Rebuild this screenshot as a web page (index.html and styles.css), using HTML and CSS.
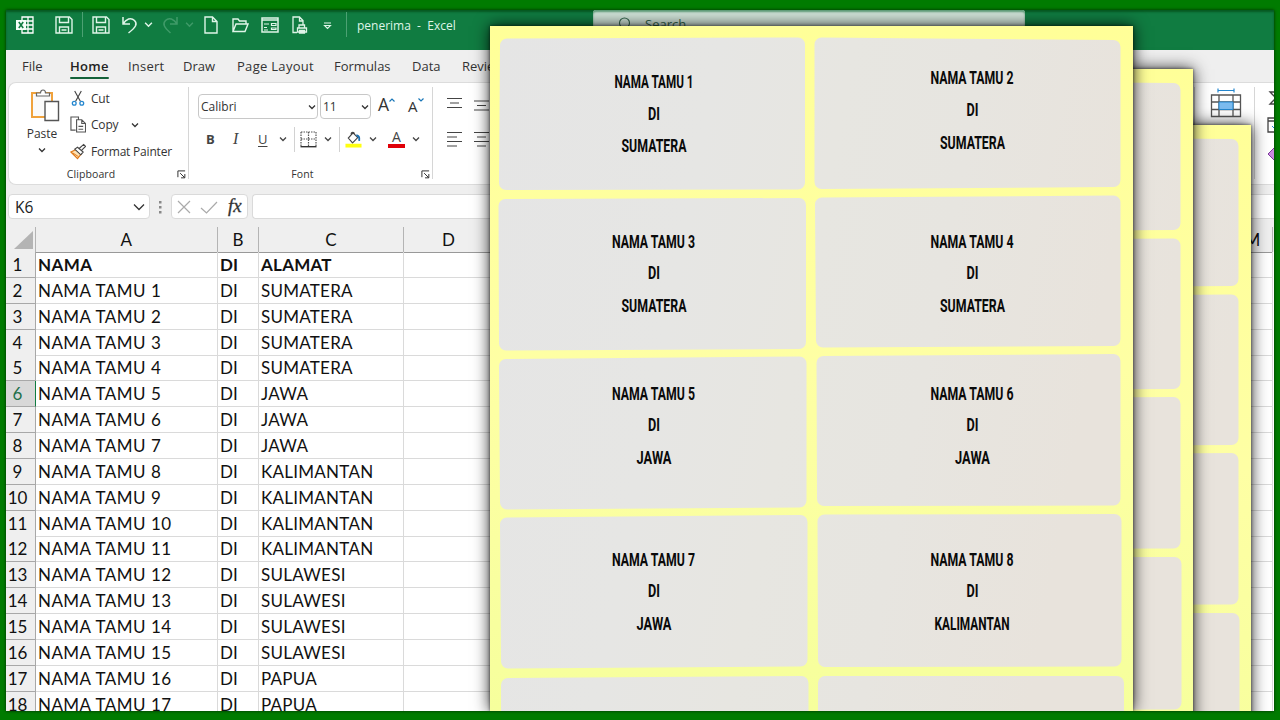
FILE: index.html
```html
<!DOCTYPE html>
<html lang="id">
<head>
<meta charset="utf-8">
<title>penerima - Excel</title>
<link rel="stylesheet" href="styles.css">
</head>
<body>
<svg width="0" height="0" class="defs">
  <defs>
    <symbol id="chev" viewBox="0 0 8 8"><path d="M1 2.5 4 5.5 7 2.5" fill="none" stroke="currentColor" stroke-width="1.3"/></symbol>
    <symbol id="save" viewBox="0 0 18 18"><path d="M1 1h13.5L17 3.500V17H1zM4.500 1v5.500h9V1M4.500 17v-6h9v6M6.500 14h5" fill="none" stroke="currentColor" stroke-width="1.4"/></symbol>
    <symbol id="launch" viewBox="0 0 10 10"><path d="M1 8V1h8M3.500 3.500 8.500 8.500M8.700 4.500v4.200H4.500" fill="none" stroke="#333" stroke-width="1.100"/></symbol>
    <linearGradient id="paper" gradientUnits="userSpaceOnUse" x1="0" y1="0" x2="643" y2="120">
      <stop offset="0" stop-color="#e5e5e5"/><stop offset=".35" stop-color="#e6e6e4"/><stop offset=".55" stop-color="#e7e6e1"/><stop offset=".75" stop-color="#e7e5e0"/><stop offset="1" stop-color="#e8e3dc"/>
    </linearGradient>
    <linearGradient id="edge" x1="0" y1="0" x2="0" y2="1">
      <stop offset="0" stop-color="#ffff98"/><stop offset=".5" stop-color="#feffa4"/><stop offset="1" stop-color="#f6ff9c"/>
    </linearGradient>
    <symbol id="labels" viewBox="0 0 643 685">
      <rect width="643" height="685" fill="url(#edge)"/>
      <g fill="url(#paper)" stroke="url(#paper)" stroke-width="14" stroke-linejoin="round">
        <path d="M17 19.500 308 18.500V156.500L16 157zM331.500 18.500 623.500 21V154L331.500 156z"/>
        <path d="M15.500 180 309 179V316L16 317.500zM332 178.500 623.500 176.500V313L333 314.500z"/>
        <path d="M16 340 309.500 337.500V474.500L17 476.500zM333.500 337 623.500 335V472.500L334 473z"/>
        <path d="M17 498.500 310.500 496V633.500L18 635.500zM334.500 495.500 624.500 495V633.500L335 634z"/>
        <path d="M18 659 311.500 657V700H18zM335 657 627 657V700H335z"/>
      </g>
    </symbol>
  </defs>
</svg>
<div class="window">
  <header class="titlebar">
    <svg class="i-xl" viewBox="0 0 18 18"><path d="M6 1h11v16H6zM6 5h11M6 9h11M6 13h11M12 1v16" fill="none" stroke="#fff" stroke-width="1.300"/><path d="M0 4h10v10H0z" fill="#f4fff8"/><path d="M2.800 6 7.200 12M7.200 6 2.800 12" stroke="#107c41" stroke-width="1.600"/></svg>
    <svg class="i-save"><use href="#save"/></svg>
    <i class="tsep"></i>
    <svg class="i-save two"><use href="#save"/></svg>
    <svg class="i-undo" viewBox="0 0 17 18"><path d="M2 1v7h7M2 8C5 3 10 1 13.500 4.500S14.500 11.500 7.500 17" fill="none" stroke="currentColor" stroke-width="1.500"/></svg>
    <svg class="i-ch"><use href="#chev"/></svg>
    <svg class="i-undo redo" viewBox="0 0 17 18"><path d="M15 1v7H8M15 8C12 3 7 1 3.500 4.500S2.500 11.500 8.500 17" fill="none" stroke="currentColor" stroke-width="1.500"/></svg>
    <svg class="i-ch dim"><use href="#chev"/></svg>
    <svg class="i-new" viewBox="0 0 14 18"><path d="M1 1h7.500L13 5.500V17H1zM8.500 1v4.500H13" fill="none" stroke="currentColor" stroke-width="1.400"/></svg>
    <svg class="i-open" viewBox="0 0 17 15"><path d="M1 13.500V1h5l1.500 2H14v3M1 13.500 4 6h12L13 13.500z" fill="none" stroke="currentColor" stroke-width="1.400"/></svg>
    <svg class="i-form" viewBox="0 0 18 16"><path d="M1 1h16v14H1zM1 3h16" fill="none" stroke="currentColor" stroke-width="1.500"/><path d="M3 7h5M3 10.500h3M10.500 6.500H15v2h-4.500zM10.500 11H15v1.500h-4.500zM3 13h4" fill="none" stroke="currentColor" stroke-width="1.200"/></svg>
    <svg class="i-print" viewBox="0 0 16 18"><path d="M5 16.500H1V1h6.500L11 4.500V9M7.500 1v4H11M7 12V9h5.500v3M5.500 12h9v4h-9zM7.500 14.500h5v2.500h-5z" fill="none" stroke="currentColor" stroke-width="1.300"/></svg>
    <svg class="i-qat" viewBox="0 0 9 8"><path d="M1 1h7M1.500 3.500h6L4.500 6.500z" fill="none" stroke="currentColor" stroke-width="1.100"/></svg>
    <i class="tsep last"></i>
    <span class="doc">penerima&nbsp; -&nbsp; Excel</span>
    <div class="search"><svg viewBox="0 0 14 14"><circle cx="6.500" cy="6" r="5" fill="none" stroke="#34664c" stroke-width="1.100"/><path d="M10 9.500 13 13" stroke="#34664c"/></svg><span>Search</span></div>
  </header>
  <nav class="tabs"><span class="t-file">File</span><span class="t-home">Home</span><span class="t-ins">Insert</span><span class="t-draw">Draw</span><span class="t-page">Page Layout</span><span class="t-form">Formulas</span><span class="t-data">Data</span><span class="t-rev">Review</span></nav>
  <section class="ribbon">
    <div class="group clipboard">
      <div class="tools">
        <div class="paste">
          <svg viewBox="0 0 30 34"><path d="M5 4h17v24H2V4z" fill="#fafafa" stroke="#f0a23c" stroke-width="2"/><path d="M6.500 7V4h4c0-4 5-4 5 0h4v3z" fill="#fff" stroke="#666" stroke-width="1.200"/><path d="M15 12.500h13.500v19H15z" fill="#fff" stroke="#555" stroke-width="1.400"/></svg>
          <span>Paste</span>
          <svg class="ch"><use href="#chev"/></svg>
        </div>
        <div class="clips">
          <div><svg viewBox="0 0 16 18"><path d="M4.500 1 10.500 12M11.500 1 5.500 12" stroke="#444" stroke-width="1.200"/><circle cx="4" cy="14" r="2" fill="none" stroke="#2587cf" stroke-width="1.400"/><circle cx="12" cy="14" r="2" fill="none" stroke="#2587cf" stroke-width="1.400"/></svg><span>Cut</span></div>
          <div><svg viewBox="0 0 17 18"><path d="M6 15H1V1h8v3M7 4h5.500l4 4v9H7zM12.500 4v4h4M9 11h5M9 14h5" fill="#fff" stroke="#555" stroke-width="1.200"/></svg><span>Copy</span><svg class="ch"><use href="#chev"/></svg></div>
          <div><svg viewBox="0 0 17 17"><path d="M1 9 7 6 12 11 8 16z" fill="#ffe2b4" stroke="#e07818" stroke-width="1.300"/><path d="M3 10l6 4" stroke="#e07818"/><path d="M5 6 8 4l6 5-2.500 3zM10 5l4.500-4L16.500 3 12.500 7" fill="#fff" stroke="#444" stroke-width="1.200"/></svg><span>Format Painter</span></div>
        </div>
      </div>
      <div class="caption">Clipboard<svg><use href="#launch"/></svg></div>
    </div>
    <div class="group font">
      <div class="frow1">
        <div class="combo name">Calibri<svg><use href="#chev"/></svg></div><div class="combo size">11<svg><use href="#chev"/></svg></div>
        <span class="grow">A<svg viewBox="0 0 6 4"><path d="M.5 3.500 3 1 5.500 3.500" fill="none" stroke="#1976b8" stroke-width="1.200"/></svg></span>
        <span class="grow small">A<svg viewBox="0 0 6 4"><path d="M.5 .5 3 3 5.500 .5" fill="none" stroke="#1976b8" stroke-width="1.200"/></svg></span>
      </div>
      <div class="frow2">
        <b>B</b><em>I</em><u>U</u><svg class="ch"><use href="#chev"/></svg><i class="rsep"></i>
        <svg class="bord" viewBox="0 0 17 17"><path d="M1 1h15v14M1 1v14M8.500 1v14M1 8h15" fill="none" stroke="#555" stroke-width="1.200" stroke-dasharray="1.500 1"/><path d="M.5 15.700h16" stroke="#333" stroke-width="1.400"/></svg><svg class="ch"><use href="#chev"/></svg><i class="rsep"></i>
        <svg class="fill" viewBox="0 0 17 18"><path d="M8 2 3 7.500 7.500 12.500 13 7 8 2M6 3.500C6 .5 9.500 .5 9.500 4" fill="none" stroke="#444" stroke-width="1.200"/><path d="M11.500 4.500c3 .5 3.500 3 3 6" fill="none" stroke="#1b6fb0" stroke-width="2"/><path d="M0 13.500h17v4H0z" fill="#ffff10"/></svg><svg class="ch"><use href="#chev"/></svg>
        <span class="acolor">A</span><svg class="ch"><use href="#chev"/></svg>
      </div>
      <div class="caption">Font<svg><use href="#launch"/></svg></div>
    </div>
    <div class="group align">
      <svg viewBox="0 0 42 14"><path d="M0 1.500h15M3 6h9M0 10.500h15M27 4h15M30 8.500h9M27 13h15" stroke="#444" stroke-width="1.200"/></svg>
      <svg viewBox="0 0 42 16"><path d="M0 1.500h15M0 6h10M0 10.500h15M0 15h10M27 1.500h15M30 6h9M27 10.500h15M30 15h9" stroke="#444" stroke-width="1.200"/></svg>
    </div>
    <div class="group cells">
      <svg viewBox="0 0 36 32"><path d="M8 .5v4M24 .5v4M8 2.500h16" stroke="#2587cf" fill="none" stroke-width="1.200"/><path d="M1.500 7h29v21.500h-29zM9 7v21.500M23 7v21.500M1.500 14h29M1.500 21.500h29" fill="#fff" stroke="#555" stroke-width="1.300"/><path d="M9 14h14v7.500H9z" fill="#7dbcf0" stroke="#2587cf"/></svg>
    </div>
    <div class="group edit">
      <svg viewBox="0 0 12 76"><path d="M11 2H3l6 6-6 6h8" fill="none" stroke="#444" stroke-width="1.300"/><path d="M1 28h11v14H1zM1 31h11" fill="none" stroke="#444" stroke-width="1.300"/><path d="M5 36l3 3 3-3" fill="none" stroke="#2587cf"/><path d="M1 64 7 58h5v12H7z" fill="#c98be0" stroke="#7d3a9c"/></svg>
    </div>
  </section>
  <section class="fbar">
    <div class="namebox">K6<svg viewBox="0 0 12 8"><path d="M1 1.500 6 6.500 11 1.500" fill="none" stroke="#333" stroke-width="1.300"/></svg></div>
    <svg class="dots" viewBox="0 0 3 14"><path d="M0 0h2.500v2.500H0zM0 5h2.500v2.500H0zM0 10h2.500v2.500H0z" fill="#888"/></svg>
    <div class="fx"><svg viewBox="0 0 42 14"><path d="M1 1 13 13M13 1 1 13M24 8 29.500 13 40 2" fill="none" stroke="#aaa" stroke-width="1.200"/></svg><span>fx</span></div>
    <div class="formula"></div>
  </section>
  <section class="grid">
    <div class="row head"><span class="n"><svg viewBox="0 0 19 18"><path d="M19 0v18H0z" fill="#b4b4b4"/></svg></span><span>A</span><span>B</span><span>C</span><span>D</span><span class="wide"></span><span>M</span></div>
    <div class="row bold"><span class="n">1</span><span>NAMA</span><span>DI</span><span>ALAMAT</span><span></span><span></span><span></span></div>
    <div class="row"><span class="n">2</span><span>NAMA TAMU 1</span><span>DI</span><span>SUMATERA</span><span></span><span></span><span></span></div>
    <div class="row"><span class="n">3</span><span>NAMA TAMU 2</span><span>DI</span><span>SUMATERA</span><span></span><span></span><span></span></div>
    <div class="row"><span class="n">4</span><span>NAMA TAMU 3</span><span>DI</span><span>SUMATERA</span><span></span><span></span><span></span></div>
    <div class="row"><span class="n">5</span><span>NAMA TAMU 4</span><span>DI</span><span>SUMATERA</span><span></span><span></span><span></span></div>
    <div class="row active"><span class="n">6</span><span>NAMA TAMU 5</span><span>DI</span><span>JAWA</span><span></span><span></span><span></span></div>
    <div class="row"><span class="n">7</span><span>NAMA TAMU 6</span><span>DI</span><span>JAWA</span><span></span><span></span><span></span></div>
    <div class="row"><span class="n">8</span><span>NAMA TAMU 7</span><span>DI</span><span>JAWA</span><span></span><span></span><span></span></div>
    <div class="row"><span class="n">9</span><span>NAMA TAMU 8</span><span>DI</span><span>KALIMANTAN</span><span></span><span></span><span></span></div>
    <div class="row"><span class="n">10</span><span>NAMA TAMU 9</span><span>DI</span><span>KALIMANTAN</span><span></span><span></span><span></span></div>
    <div class="row"><span class="n">11</span><span>NAMA TAMU 10</span><span>DI</span><span>KALIMANTAN</span><span></span><span></span><span></span></div>
    <div class="row"><span class="n">12</span><span>NAMA TAMU 11</span><span>DI</span><span>KALIMANTAN</span><span></span><span></span><span></span></div>
    <div class="row"><span class="n">13</span><span>NAMA TAMU 12</span><span>DI</span><span>SULAWESI</span><span></span><span></span><span></span></div>
    <div class="row"><span class="n">14</span><span>NAMA TAMU 13</span><span>DI</span><span>SULAWESI</span><span></span><span></span><span></span></div>
    <div class="row"><span class="n">15</span><span>NAMA TAMU 14</span><span>DI</span><span>SULAWESI</span><span></span><span></span><span></span></div>
    <div class="row"><span class="n">16</span><span>NAMA TAMU 15</span><span>DI</span><span>SULAWESI</span><span></span><span></span><span></span></div>
    <div class="row"><span class="n">17</span><span>NAMA TAMU 16</span><span>DI</span><span>PAPUA</span><span></span><span></span><span></span></div>
    <div class="row"><span class="n">18</span><span>NAMA TAMU 17</span><span>DI</span><span>PAPUA</span><span></span><span></span><span></span></div>
  </section>

  <svg class="sheet third" viewBox="0 0 643 685"><use href="#labels"/></svg>
  <svg class="sheet second" viewBox="0 0 643 685"><use href="#labels"/></svg>
  <svg class="sheet first" viewBox="0 0 643 685">
    <use href="#labels"/>
    <g class="label-text" transform="translate(0 -.7)">
      <text x="124.500" y="63" textLength="79" lengthAdjust="spacingAndGlyphs">NAMA TAMU 1</text><text x="158" y="94.500" textLength="12" lengthAdjust="spacingAndGlyphs">DI</text><text x="131.500" y="126.500" textLength="65" lengthAdjust="spacingAndGlyphs">SUMATERA</text>
      <text x="440.500" y="59" textLength="83" lengthAdjust="spacingAndGlyphs">NAMA TAMU 2</text><text x="476.500" y="90.500" textLength="12" lengthAdjust="spacingAndGlyphs">DI</text><text x="450" y="123.500" textLength="65" lengthAdjust="spacingAndGlyphs">SUMATERA</text>
      <text x="122" y="223" textLength="83" lengthAdjust="spacingAndGlyphs">NAMA TAMU 3</text><text x="158" y="254" textLength="12" lengthAdjust="spacingAndGlyphs">DI</text><text x="131.500" y="287" textLength="65" lengthAdjust="spacingAndGlyphs">SUMATERA</text>
      <text x="440.500" y="223" textLength="83" lengthAdjust="spacingAndGlyphs">NAMA TAMU 4</text><text x="476.500" y="254" textLength="12" lengthAdjust="spacingAndGlyphs">DI</text><text x="450" y="287" textLength="65" lengthAdjust="spacingAndGlyphs">SUMATERA</text>
      <text x="122" y="375" textLength="83" lengthAdjust="spacingAndGlyphs">NAMA TAMU 5</text><text x="158" y="406" textLength="12" lengthAdjust="spacingAndGlyphs">DI</text><text x="146.500" y="439" textLength="35" lengthAdjust="spacingAndGlyphs">JAWA</text>
      <text x="440.500" y="375" textLength="83" lengthAdjust="spacingAndGlyphs">NAMA TAMU 6</text><text x="476.500" y="406" textLength="12" lengthAdjust="spacingAndGlyphs">DI</text><text x="465" y="439" textLength="35" lengthAdjust="spacingAndGlyphs">JAWA</text>
      <text x="122" y="540.500" textLength="83" lengthAdjust="spacingAndGlyphs">NAMA TAMU 7</text><text x="158" y="572" textLength="12" lengthAdjust="spacingAndGlyphs">DI</text><text x="146.500" y="604.500" textLength="35" lengthAdjust="spacingAndGlyphs">JAWA</text>
      <text x="440.500" y="540.500" textLength="83" lengthAdjust="spacingAndGlyphs">NAMA TAMU 8</text><text x="476.500" y="572" textLength="12" lengthAdjust="spacingAndGlyphs">DI</text><text x="444.500" y="604.500" textLength="75" lengthAdjust="spacingAndGlyphs">KALIMANTAN</text>
    </g>
  </svg>
</div>
</body>
</html>
```
FILE: styles.css
```css
* { box-sizing: border-box; }
body { margin: 0; width: 1280px; height: 720px; overflow: hidden; background: #007b00; padding: 10px 6px 9px; font-family: "Open Sans", "Noto Sans", sans-serif; color: #333; }
.defs { position: absolute; }
.window { position: relative; height: 701px; overflow: hidden; background: #efefef; display: flex; flex-direction: column; box-shadow: 0 0 3px #002800; }
.window svg { flex: none; display: block; }

.titlebar { height: 40px; flex: none; background: #107c41; color: #dff5e8; display: flex; align-items: flex-start; padding: 6px 0 0 10px; box-shadow: inset 0 2px 2px #075a22; }
.i-xl { width: 18px; height: 18px; }
.i-save { width: 18px; height: 18px; margin-left: 21px; }
.i-save.two { margin-left: 9px; }
.tsep { width: 1px; height: 25px; background: #4ca173; margin: -4px 0 0 9px; }
.i-undo { width: 17px; height: 18px; margin-left: 11px; }
.i-ch { width: 9px; height: 9px; margin: 4px 0 0 6px; }
.redo, .dim { color: #3f9a68; }
.redo { margin-left: 9px; }
.i-new { width: 14px; height: 18px; margin-left: 10px; }
.i-open { width: 17px; height: 15px; margin: 2px 0 0 14px; }
.i-form { width: 18px; height: 16px; margin: 1px 0 0 12px; }
.i-print { width: 16px; height: 18px; margin-left: 13px; }
.i-qat { width: 9px; height: 8px; margin: 6px 0 0 15px; }
.tsep.last { margin-left: 14px; }
.doc { font-size: 12px; line-height: 20px; margin-left: 10px; width: 110px; white-space: nowrap; }
.search { width: 432px; height: 30px; margin: -6px 0 0 126px; background: #d0e3d8; border-radius: 3px; display: flex; padding: 7px 0 0 25px; gap: 13px; color: #34664c; font-size: 13px; line-height: 15px; box-shadow: inset 0 2px 2px #5b9c77; }
.search svg { width: 14px; height: 14px; }

.tabs { height: 32px; flex: none; display: grid; grid-template-columns: 48px 58px 55px 53px 98px 78px 50px 50px; padding-left: 16px; font-size: 13px; line-height: 32px; white-space: nowrap; }
.t-home { font-weight: 600; letter-spacing: .3px; color: #222; position: relative; }
.t-page { padding-left: 1px; letter-spacing: .3px; }
.t-ins { letter-spacing: .2px; }
.t-home::after { content: ""; position: absolute; left: 0; top: 27px; width: 39px; height: 2px; background: #14623a; border-radius: 1px; }

.ribbon { height: 103px; flex: none; margin-left: 2px; background: #fff; border: 1px solid #dcdcdc; border-right: 0; border-radius: 8px 0 0 8px; display: flex; font-size: 12px; }
.group { position: relative; flex: none; }
.group:not(.edit)::after { content: ""; position: absolute; right: 0; top: 4px; height: 92px; border-right: 1px solid #d6d6d6; }
.ch { width: 8px; height: 8px; }
.clipboard { width: 180px; padding-top: 6px; }
.tools { display: flex; height: 77px; }
.paste { width: 50px; margin-left: 8px; display: flex; flex-direction: column; align-items: center; }
.paste > svg:first-child { width: 30px; height: 34px; margin-left: 5px; }
.paste span { line-height: 17px; margin: 2px 0 4px; }
.clips { display: flex; flex-direction: column; margin-left: 3px; gap: 8.500px; letter-spacing: -.2px; }
.clips div { display: flex; align-items: center; height: 18px; white-space: nowrap; }
.clips div > svg:first-child { width: 16px; height: 17px; margin-right: 5px; }
.clips .ch { margin-left: 13px; }
.caption { display: flex; justify-content: center; font-size: 10.500px; letter-spacing: .1px; line-height: 16px; position: relative; padding-right: 16px; }
.caption svg { position: absolute; right: 3px; top: 4px; width: 9px; height: 9px; }
.font { width: 244px; padding: 11px 0 0 9px; }
.frow1 { display: flex; height: 26px; }
.combo { height: 25px; border: 1px solid #c8c8c8; border-radius: 4px; line-height: 24px; padding-left: 2px; display: flex; justify-content: space-between; align-items: center; }
.combo svg { width: 8px; height: 8px; margin-right: 1px; }
.name { width: 120px; }
.size { width: 51px; margin-left: 2px; }
.grow { font-size: 17.500px; line-height: 21px; margin-left: 7px; display: flex; }
.grow svg { width: 6px; height: 4px; margin-top: 4px; }
.grow.small { font-size: 15px; line-height: 24px; margin-left: 13px; }
.frow2 { display: flex; align-items: center; height: 32px; margin-top: 3px; padding-left: 8px; font-size: 14px; color: #444; }
.frow2 b { width: 27px; font-size: 13px; }
.frow2 em { width: 25px; font-family: "Liberation Serif", serif; font-size: 16px; }
.frow2 u { width: 21px; text-underline-offset: 2px; font-size: 13px; }
.rsep { width: 1px; height: 25px; background: #d2d2d2; margin: 0 5px 0 7px; }
.rsep + svg { width: 17px; height: 17px; margin-right: 7px; }
.bord + .ch + .rsep { margin-right: 5px; margin-left: 7px; }
.acolor { width: 17px; height: 18px; line-height: 14px; text-align: center; border-bottom: 4px solid #e00008; margin: 0 7px 0 11px; }
.font .caption { margin-top: 11px; padding-right: 26px; height: 16px; }
.align { width: 762px; padding: 14px 0 0 13.500px; }
.align svg { width: 42px; height: 14px; margin-bottom: 20px; }
.align svg + svg { height: 16px; }
.cells { width: 60px; padding: 5px 0 0 15px; }
.cells svg { width: 36px; height: 32px; }
.edit { padding: 7px 0 0 12px; }
.edit svg { width: 12px; height: 76px; }

.fbar { height: 42px; flex: none; display: flex; padding: 9px 0 0 2px; }
.namebox { width: 142px; height: 25px; background: #fff; border: 1px solid #dadada; border-radius: 4px; padding: 0 4px 0 6px; display: flex; align-items: center; justify-content: space-between; font-size: 15.500px; line-height: 22px; color: #222; }
.namebox svg { width: 12px; height: 8px; }
.dots { width: 3px; height: 14px; margin: 7px 9px 0 9px; }
.fx { width: 77px; height: 25px; background: #fff; border: 1px solid #dadada; border-radius: 4px; display: flex; align-items: center; padding-left: 5px; }
.fx svg { width: 42px; height: 14px; }
.fx span { font: italic 19px/20px "Liberation Serif", serif; margin: -2px 0 0 9px; -webkit-text-stroke: .3px #333; }
.formula { flex: 1; height: 25px; margin-left: 4px; background: #fff; border: 1px solid #dadada; border-right: 0; border-radius: 4px 0 0 4px; }

.grid { font-family: Lato, sans-serif; font-size: 17px; color: #111; }
.row { display: grid; grid-template-columns: 30px 182px 41px 145px 90px 739px 40px 1fr; height: 25.870px; background: #fff; }
.row span { border-right: 1px solid #dadada; border-bottom: 1px solid #dadada; padding-left: 2px; line-height: 25px; white-space: nowrap; letter-spacing: .25px; }
.row span:nth-child(2) { letter-spacing: .4px; word-spacing: .5px; }
.row span:nth-child(3) { letter-spacing: 0; }
.row .n { background: #efefef; border-color: #a8a8a8; text-align: center; padding: 0; letter-spacing: 0; padding-right: 6px; }
.row.head { height: 25px; background: #efefef; }
.row.head span { border-bottom-color: #999; border-right-color: #b4b4b4; padding: 0; text-align: center; }
.row.head .n { padding: 4px 0 0 8px; }
.head .n svg { width: 19px; height: 18px; }
.bold span:not(.n) { font-weight: 700; }
.active .n { background: #d8d8d8; color: #23714a; border-right-color: #107c41; }

.sheet { position: absolute; width: 643px; height: 685px; box-shadow: 0 0 15px rgba(0,0,0,.85), 0 0 3px rgba(0,0,0,.6); }
.first { left: 484px; top: 16px; }
.second { left: 543.500px; top: 59px; }
.third { left: 602px; top: 115px; }
.label-text { font: 700 19px Roboto, sans-serif; fill: #0a0a0a; }
```
